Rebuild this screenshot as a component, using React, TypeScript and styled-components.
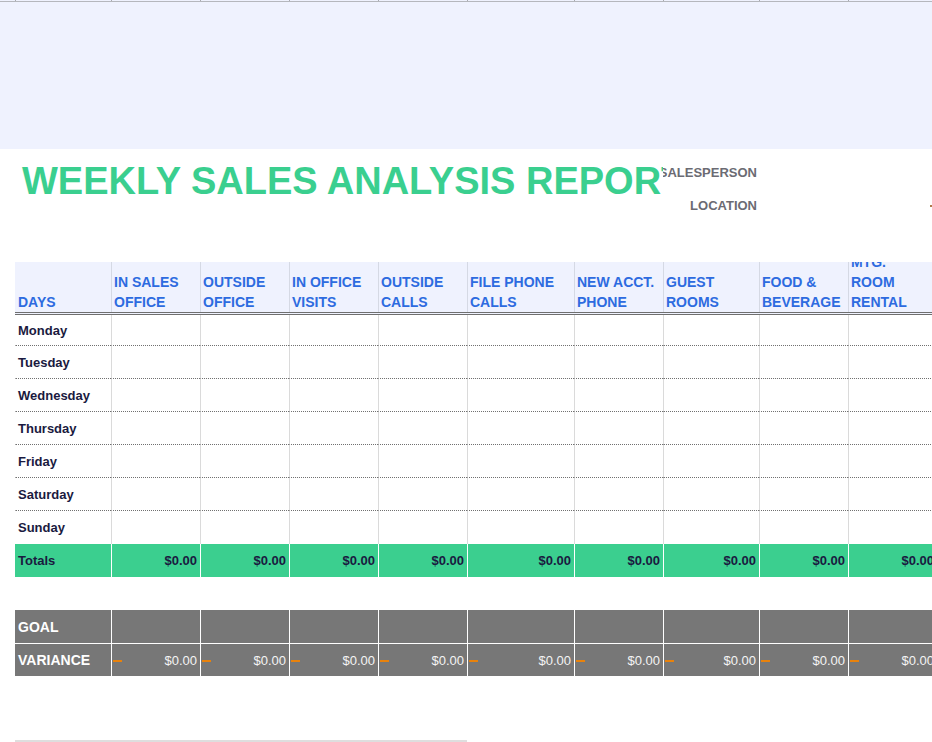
import styled, { createGlobalStyle } from "styled-components";

const COLUMNS = [96, 89, 89, 89, 89, 107, 89, 96, 89, 89];
const TRACKS = COLUMNS.map((w) => `${w}px`).join(" ");

const HEADINGS: string[][] = [
  ["DAYS"],
  ["IN SALES", "OFFICE"],
  ["OUTSIDE", "OFFICE"],
  ["IN OFFICE", "VISITS"],
  ["OUTSIDE", "CALLS"],
  ["FILE PHONE", "CALLS"],
  ["NEW ACCT.", "PHONE"],
  ["GUEST", "ROOMS"],
  ["FOOD &", "BEVERAGE"],
  ["MTG.", "ROOM", "RENTAL"],
];

const DAYS = ["Monday", "Tuesday", "Wednesday", "Thursday", "Friday", "Saturday", "Sunday"];
const VALUE_COLUMNS = COLUMNS.slice(1);

const GlobalStyle = createGlobalStyle`
  * { box-sizing: border-box; }
  html, body {
    margin: 0;
    padding: 0;
    background: #ffffff;
    overflow: hidden;
  }
  body {
    font-family: "Liberation Sans", Arial, sans-serif;
  }
`;

const Page = styled.div`
  width: 932px;
  height: 742px;
  overflow: hidden;
`;

const TopBand = styled.div`
  height: 149px;
  background: #eff2fe;
`;

const Ruler = styled.div`
  display: grid;
  grid-template-columns: ${TRACKS};
  padding-left: 15px;
  height: 2px;
  border-bottom: 1px solid #b5b7bd;
`;

const RulerTick = styled.span`
  border-left: 1px solid #a9abb0;
`;

const Heading = styled.div`
  display: grid;
  grid-template-columns: ${TRACKS};
  grid-template-rows: 33px 33px;
  padding: 7px 0 0 15px;
  margin-bottom: 40px;
`;

const Title = styled.h1`
  grid-column: 1 / 8;
  grid-row: 1 / 3;
  align-self: start;
  margin: 0;
  padding: 6px 0 0 7px;
  font-size: 38px;
  line-height: 38px;
  font-weight: 700;
  color: #3acf8f;
  white-space: nowrap;
  overflow: hidden;
`;

const FieldLabel = styled.div<{ $row: number }>`
  grid-column: 8;
  grid-row: ${(p) => p.$row};
  display: flex;
  justify-content: flex-end;
  align-items: center;
  overflow: hidden;
  padding-right: 2px;
  font-size: 13px;
  font-weight: 700;
  color: #6b6b73;
  white-space: nowrap;
  background: #ffffff;
`;

const StrayMark = styled.span`
  grid-column: 10;
  grid-row: 2;
  align-self: center;
  justify-self: start;
  margin-left: 82px;
  width: 3px;
  height: 2px;
  background: #b07a4a;
`;

const Table = styled.div`
  padding-left: 15px;
`;

const Row = styled.div<{ $h?: number }>`
  display: grid;
  grid-template-columns: ${TRACKS};
  height: ${(p) => p.$h ?? 33}px;
`;

const HeaderRow = styled(Row)`
  background: #eff2fe;
  border-bottom: 3px double #6f6f6f;
`;

const HeaderCell = styled.div<{ $first?: boolean }>`
  display: flex;
  flex-direction: column;
  justify-content: flex-end;
  overflow: hidden;
  padding: 0 2px;
  border-left: 1px solid ${(p) => (p.$first ? "transparent" : "#d5d9e4")};
  color: #2d6be0;
  font-size: 14px;
  font-weight: 700;
  line-height: 20px;
  white-space: nowrap;
`;

const DayCell = styled.div<{ $first?: boolean; $dotted: boolean }>`
  display: flex;
  align-items: center;
  padding: 0 2px;
  border-left: 1px solid ${(p) => (p.$first ? "transparent" : "#dadada")};
  border-bottom: ${(p) => (p.$dotted ? "1px dotted #707070" : "none")};
  font-size: 13px;
  font-weight: 700;
  color: #1a1a40;
`;

const TotalsRow = styled(Row)`
  background: #3bcf8f;
`;

const TotalsCell = styled.div<{ $first?: boolean }>`
  display: flex;
  align-items: center;
  justify-content: ${(p) => (p.$first ? "flex-start" : "flex-end")};
  padding: 0 3px 0 2px;
  border-left: 1px solid ${(p) => (p.$first ? "transparent" : "#ffffff")};
  font-size: 13px;
  font-weight: 700;
  color: #1a1a40;
  white-space: nowrap;
`;

const Spacer = styled.div`
  height: 33px;
`;

const SummaryRow = styled(Row)`
  background: #777777;
  & + & {
    border-top: 1px solid #ffffff;
  }
`;

const SummaryCell = styled.div<{ $first?: boolean }>`
  display: flex;
  align-items: center;
  justify-content: space-between;
  padding: 0 3px 0 ${(p) => (p.$first ? 2 : 1)}px;
  border-left: 1px solid ${(p) => (p.$first ? "transparent" : "#ffffff")};
  font-size: 13px;
  color: #f4f4f4;
  white-space: nowrap;
`;

const SummaryLabel = styled.span`
  font-size: 14px;
  font-weight: 700;
  color: #ffffff;
`;

const Dash = styled.span`
  flex: none;
  width: 9px;
  height: 2px;
  margin-top: 1px;
  background: #e8820c;
`;

const FooterRule = styled.div`
  margin: 64px 0 0 15px;
  width: 452px;
  height: 2px;
  background: #dedede;
`;

export default function App() {
  return (
    <Page>
      <GlobalStyle />
      <TopBand>
        <Ruler>
          {COLUMNS.map((_, i) => (
            <RulerTick key={i} />
          ))}
        </Ruler>
      </TopBand>

      <Heading>
        <Title>WEEKLY SALES ANALYSIS REPORT</Title>
        <FieldLabel $row={1}>SALESPERSON</FieldLabel>
        <FieldLabel $row={2}>LOCATION</FieldLabel>
        <StrayMark />
      </Heading>

      <Table>
        <HeaderRow $h={53}>
          {HEADINGS.map((lines, i) => (
            <HeaderCell key={i} $first={i === 0}>
              {lines.map((line) => (
                <span key={line}>{line}</span>
              ))}
            </HeaderCell>
          ))}
        </HeaderRow>

        {DAYS.map((day, r) => (
          <Row key={day} $h={r === 0 ? 31 : 33}>
            <DayCell $first $dotted={r < DAYS.length - 1}>
              {day}
            </DayCell>
            {VALUE_COLUMNS.map((_, c) => (
              <DayCell key={c} $dotted={r < DAYS.length - 1} />
            ))}
          </Row>
        ))}

        <TotalsRow>
          <TotalsCell $first>Totals</TotalsCell>
          {VALUE_COLUMNS.map((_, c) => (
            <TotalsCell key={c}>$0.00</TotalsCell>
          ))}
        </TotalsRow>

        <Spacer />

        <SummaryRow>
          <SummaryCell $first>
            <SummaryLabel>GOAL</SummaryLabel>
          </SummaryCell>
          {VALUE_COLUMNS.map((_, c) => (
            <SummaryCell key={c} />
          ))}
        </SummaryRow>
        <SummaryRow>
          <SummaryCell $first>
            <SummaryLabel>VARIANCE</SummaryLabel>
          </SummaryCell>
          {VALUE_COLUMNS.map((_, c) => (
            <SummaryCell key={c}>
              <Dash />
              <span>$0.00</span>
            </SummaryCell>
          ))}
        </SummaryRow>
      </Table>

      <FooterRule />
    </Page>
  );
}
